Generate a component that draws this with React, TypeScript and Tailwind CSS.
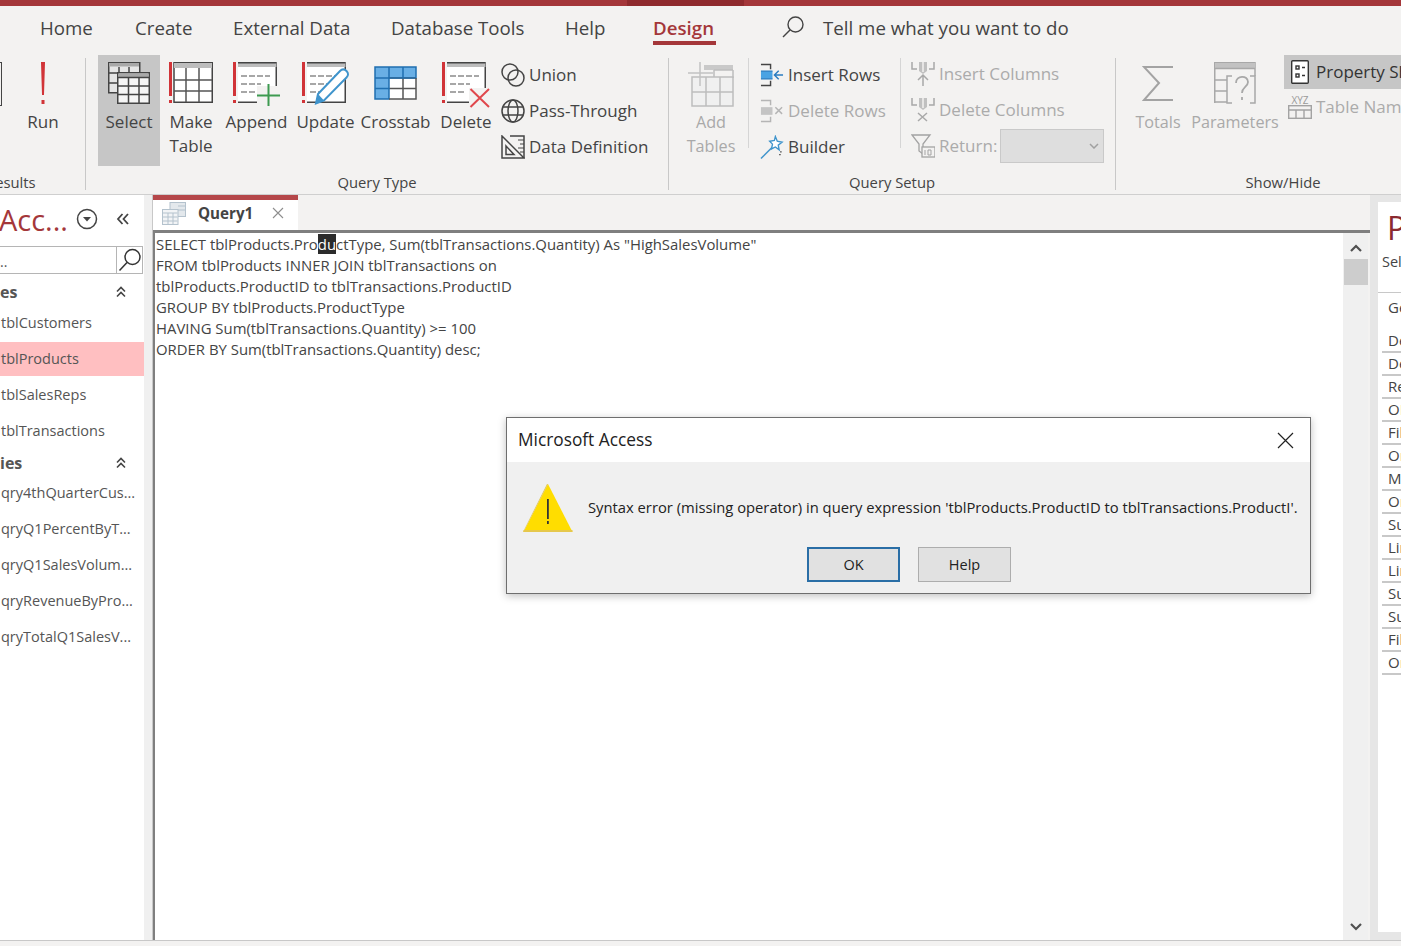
const FONT = "font-['Open_Sans','Noto_Sans',sans-serif]";

const TABS = [
  { label: "Home", w: "w-[95px]" },
  { label: "Create", w: "w-[98px]" },
  { label: "External Data", w: "w-[158px]" },
  { label: "Database Tools", w: "w-[174px]" },
  { label: "Help", w: "w-[88px]" },
];

const SQL = [
  `FROM tblProducts INNER JOIN tblTransactions on`,
  `tblProducts.ProductID to tblTransactions.ProductID`,
  `GROUP BY tblProducts.ProductType`,
  `HAVING Sum(tblTransactions.Quantity) >= 100`,
  `ORDER BY Sum(tblTransactions.Quantity) desc;`,
];

const PROPS = [
  "Description", "Default View", "Recordset Type", "ODBC Timeout", "Filter",
  "Order By", "Max Records", "Orientation", "Subdatasheet Name", "Link Child Fields",
  "Link Master Fields", "Subdatasheet Height", "Subdatasheet Expanded", "Filter On Load", "Order By On Load",
];

function RedBang({ x = 1.5 }: { x?: number }) {
  return (
    <>
      <rect x={x - 1.5} y="0" width="3" height="34" fill="#d13438" />
      <rect x={x - 1.5} y="38" width="3" height="3" fill="#d13438" />
    </>
  );
}

function Dashes() {
  return (
    <g stroke="#8a8a8a" strokeWidth="1.5">
      <path d="M8 14h6M16 14h6M24 14h6M32 14h5" />
      <path d="M8 22h6M16 22h6M24 22h4" />
      <path d="M8 30h6M16 30h6" />
    </g>
  );
}

function TableBase() {
  return (
    <>
      <path d="M5 .75H43.25V40.25H5" fill="#fff" stroke="#444" strokeWidth="1.5" />
      <rect x="5" y="0" width="38.5" height="5" fill="#bdbdbd" />
      <path d="M5 .75H43.25" stroke="#444" strokeWidth="1.5" />
    </>
  );
}

function SelectIcon() {
  return (
    <svg width="42" height="42" viewBox="0 0 42 42" fill="none">
      <rect x=".75" y=".75" width="31" height="30" fill="#e6e6e6" stroke="#444" strokeWidth="1.5" />
      <rect x="1" y="1" width="30" height="3.5" fill="#a8a8a8" />
      <path d="M1 11h9M1 21h9M11 5v5M21 5v5" stroke="#444" strokeWidth="1.5" />
      <rect x="9.75" y="10.75" width="31.5" height="30.5" fill="#f5f5f5" stroke="#444" strokeWidth="1.5" />
      <rect x="10.5" y="11.5" width="30" height="3.5" fill="#a8a8a8" />
      <path d="M10 15.5h31M10 24h31M10 32.5h31M20.5 15v26M31 15v26" stroke="#444" strokeWidth="1.5" />
    </svg>
  );
}

function MakeTableIcon() {
  return (
    <svg width="44" height="42" viewBox="0 0 44 42" fill="none">
      <RedBang />
      <rect x="5" y=".75" width="38.25" height="39.5" fill="#fff" stroke="#444" strokeWidth="1.5" />
      <rect x="5" y="1" width="38" height="5" fill="#bdbdbd" />
      <path d="M5 18h38M5 29h38M17 6v34M30 6v34" stroke="#555" strokeWidth="1.5" />
    </svg>
  );
}

function AppendIcon() {
  return (
    <svg width="48" height="44" viewBox="0 0 48 44" fill="none">
      <RedBang />
      <TableBase />
      <Dashes />
      <rect x="24" y="24" width="22" height="18" fill="#f3f2f1" />
      <path d="M24 33.5H47M35.5 22V45" stroke="#3d9a50" strokeWidth="2" />
    </svg>
  );
}

function UpdateIcon() {
  return (
    <svg width="48" height="44" viewBox="0 0 48 44" fill="none">
      <RedBang />
      <TableBase />
      <Dashes />
      <path d="M16 32 38 9c2-2 4.500-2 6.500 0s2 4.500 0 6.500L22 38.500l-8 3z" fill="#fff" stroke="#3f94cc" strokeWidth="2" />
      <path d="M16 32l6 6.500-8 3z" fill="#3f94cc" />
    </svg>
  );
}

function CrosstabIcon() {
  return (
    <svg width="43" height="34" viewBox="0 0 43 34" fill="none">
      <rect x="1" y="1" width="41" height="32" fill="#fff" />
      <rect x="1" y="1" width="41" height="11" fill="#69afe5" />
      <rect x="1" y="12" width="14" height="21" fill="#69afe5" />
      <path d="M15 12h27M15 22.5h27M29 12v21" stroke="#555" strokeWidth="1.5" />
      <path d="M1 1H42V12H15V33H1ZM1 12H15M1 22.5H15M15 1V12M29 1V12" stroke="#1f6fb0" strokeWidth="1.5" />
      <path d="M29 33H42V12" stroke="#555" strokeWidth="1.5" />
      <path d="M15 33H29" stroke="#555" strokeWidth="1.5" />
    </svg>
  );
}

function DeleteIcon() {
  return (
    <svg width="48" height="46" viewBox="0 0 48 46" fill="none">
      <RedBang />
      <TableBase />
      <Dashes />
      <rect x="27" y="26" width="20" height="20" fill="#f3f2f1" />
      <path d="M28.5 27 47 45M47 27 28.5 45" stroke="#e0474c" strokeWidth="2" />
    </svg>
  );
}

function UnionIcon() {
  return (
    <svg width="24" height="24" viewBox="0 0 24 24" fill="none" stroke="#444" strokeWidth="1.5">
      <circle cx="9" cy="9" r="8" />
      <circle cx="15" cy="15" r="8" />
    </svg>
  );
}

function GlobeIcon() {
  return (
    <svg width="24" height="24" viewBox="0 0 24 24" fill="none" stroke="#444" strokeWidth="1.5">
      <circle cx="12" cy="12" r="11" />
      <ellipse cx="12" cy="12" rx="5" ry="11" />
      <path d="M2 8h20M2 16h20" />
    </svg>
  );
}

function DataDefIcon() {
  return (
    <svg width="24" height="24" viewBox="0 0 24 24" fill="none" stroke="#444" strokeWidth="1.5">
      <path d="M1 1 23 23H1Z" />
      <path d="M5 11 13 19.5H5Z" />
      <path d="M9 1H23V23" />
      <path d="M17 5h6M19 9h4M17 13h6M19 17h4" strokeWidth="1.2" />
    </svg>
  );
}

function AddTablesIcon() {
  return (
    <svg width="46" height="46" viewBox="0 0 46 46" fill="none" stroke="#bdbdbd" strokeWidth="1.5">
      <path d="M4 15 H45 V44 H4 Z" fill="#f0f0f0" />
      <rect x="16" y="3" width="29" height="5" fill="#c9c9c9" stroke="none" />
      <path d="M26 8h19M45 8v8M4 30h41M18 15v29M32 15v29M26 8v7" />
      <path d="M0 11h25M12 0v24" stroke="#c2c2c2" strokeWidth="1.5" />
    </svg>
  );
}

function InsertRowsIcon() {
  return (
    <svg width="25" height="24" viewBox="0 0 25 24" fill="none">
      <path d="M1 1H11V6M1 23H11V18" stroke="#444" strokeWidth="1.5" />
      <rect x="1" y="8" width="12" height="8" fill="#4aa3e3" />
      <path d="M1 8h12M1 16h12" stroke="#2b7cc0" strokeWidth="1.2" />
      <path d="M24 12H15M19.500 7.500 15 12l4.500 4.500" stroke="#2b7cc0" strokeWidth="1.5" />
    </svg>
  );
}

function DeleteRowsIcon() {
  return (
    <svg width="25" height="24" viewBox="0 0 25 24" fill="none">
      <path d="M1 1H11V6M1 23H11V18" stroke="#b5b5b5" strokeWidth="1.5" />
      <rect x="1" y="8" width="12" height="8" fill="#c4c4c4" />
      <path d="M16 8l7 7M23 8l-7 7" stroke="#b5b5b5" strokeWidth="1.5" />
    </svg>
  );
}

function BuilderIcon() {
  return (
    <svg width="25" height="25" viewBox="0 0 25 25" fill="none">
      <path d="M1 24 14 11" stroke="#3f94cc" strokeWidth="1.6" />
      <path d="M16 1l2 5 5 1-4 3 1 5-4-3-4 2 1-5-3-3 5-1z" fill="#fff" stroke="#3f94cc" strokeWidth="1.4" />
      <path d="M21 17h1.5M20 20h1.5" stroke="#444" strokeWidth="1.2" />
    </svg>
  );
}

function ColumnsIcon({ mark }: { mark: "arrow" | "x" }) {
  return (
    <svg width="24" height="24" viewBox="0 0 24 24" fill="none" stroke="#a8a8a8" strokeWidth="1.5">
      <path d="M1 0V7H6M23 0V7H18" />
      <path d="M8 0V9L12 12L16 9V0" fill="#c0c0c0" stroke="none" />
      <path d="M12 0V10" stroke="#f3f2f1" />
      {mark === "arrow" ? <path d="M12 24V14M7 18l5-5 5 5" /> : <path d="M7 15l9 8M16 15l-9 8" />}
    </svg>
  );
}

function ReturnIcon() {
  return (
    <svg width="24" height="24" viewBox="0 0 24 24" fill="none" stroke="#a3a3a3" strokeWidth="1.3">
      <path d="M1 1H19L12 10V20L8 17V10Z" />
      <rect x="11" y="13" width="13" height="10" fill="#f3f2f1" />
      <path d="M14 16v5M17 16h3v5h-3z" strokeWidth="1" />
    </svg>
  );
}

function ParametersIcon() {
  return (
    <svg width="42" height="42" viewBox="0 0 42 42" fill="none" stroke="#a8a8a8" strokeWidth="1.5">
      <path d="M.75 41V.75H41V14" />
      <rect x="1" y="1" width="40" height="5" fill="#c2c2c2" stroke="none" />
      <path d="M1 6.5H41M1 18h12M1 29h12M1 40h12" />
      <path d="M18 14h-5v27h5M36 14h5v27h-5" />
      <path d="M22 21c0-8 12-8 12-1 0 5-6 5-6 11M28 35v3" strokeWidth="1.8" />
    </svg>
  );
}

function PropertySheetIcon() {
  return (
    <svg width="18" height="24" viewBox="0 0 18 24" fill="#fff" stroke="#333" strokeWidth="1.4">
      <rect x=".7" y=".7" width="16.6" height="22.6" rx="1" />
      <rect x="5" y="6" width="3" height="3" />
      <rect x="5" y="14" width="3" height="3" />
      <path d="M11 7.5h3M11 15.5h3" />
    </svg>
  );
}

function TableNamesIcon() {
  return (
    <div className="flex w-6 flex-col items-center">
      <span className="text-[10px] leading-[10px] text-[#9a9a9a]">XYZ</span>
      <svg width="24" height="14" viewBox="0 0 24 14" fill="none" stroke="#a3a3a3" strokeWidth="1.4">
        <rect x=".7" y=".7" width="22.6" height="12.6" />
        <path d="M1 5h22M8 5v8M16 5v8" />
      </svg>
    </div>
  );
}

function BigButton({ icon, lines, active, disabled, w }: { icon: React.ReactNode; lines: string[]; active?: boolean; disabled?: boolean; w: string }) {
  return (
    <div className={`${w} flex h-[111px] shrink-0 flex-col items-center pt-[7px] ${active ? "bg-[#c6c6c6]" : ""} ${disabled ? "text-[16.2px] text-[#a9a9a9]" : "text-[17px] text-[#444]"}`}>
      <div className="flex h-[47px] w-full items-start justify-center">{icon}</div>
      <div className="mt-px text-center leading-[24px]">
        {lines.map((l) => (
          <div key={l}>{l}</div>
        ))}
      </div>
    </div>
  );
}

function SmallButton({ icon, label, disabled }: { icon: React.ReactNode; label: string; disabled?: boolean }) {
  return (
    <div className={`flex h-[36px] items-center gap-[4px] text-[17px] whitespace-nowrap ${disabled ? "text-[#ababab]" : "text-[#444]"}`}>
      <div className="flex w-6 shrink-0 justify-center">{icon}</div>
      {label}
    </div>
  );
}

function Group({ label, w, children }: { label: string; w: string; children: React.ReactNode }) {
  return (
    <div className={`${w} flex shrink-0 flex-col`}>
      <div className="flex h-[114px] items-start">{children}</div>
      <div className="mt-[3px] text-center text-[14.8px] leading-[20px] text-[#444]">{label}</div>
    </div>
  );
}

function Sep() {
  return <div className="mt-[3px] h-[132px] w-px shrink-0 bg-[#c8c8c8]" />;
}

function Ribbon() {
  return (
    <div className="flex h-[143px] shrink-0 border-b border-[#cfcfcf] bg-[#f3f2f1] pt-[3px]">
      <div className="flex w-[85px] shrink-0 flex-col">
        <div className="flex h-[114px] items-start">
          <div className="h-[44px] w-[2px] translate-y-[7px] border-y-[1.5px] border-r-[1.5px] border-[#444]" />
          <div className="ml-[12px] flex w-[58px] flex-col items-center pt-[7px] text-[17px] text-[#444]">
            <svg width="6" height="42" viewBox="0 0 6 42" fill="#d13438">
              <path d="M1 0h4L4 33H2z" />
              <rect x="1.5" y="38" width="3" height="4" />
            </svg>
            <div className="mt-[6px] leading-[24px]">Run</div>
          </div>
        </div>
        <div className="mt-[3px] -ml-[14px] text-[14.8px] leading-[20px] text-[#444]">Results</div>
      </div>
      <Sep />
      <Group label="Query Type" w="w-[582px]">
        <div className="ml-[12px] flex">
          <BigButton active w="w-[62px]" icon={<SelectIcon />} lines={["Select"]} />
          <BigButton w="w-[62px]" icon={<MakeTableIcon />} lines={["Make", "Table"]} />
          <BigButton w="w-[69px]" icon={<AppendIcon />} lines={["Append"]} />
          <BigButton w="w-[69px]" icon={<UpdateIcon />} lines={["Update"]} />
          <BigButton w="w-[71px]" icon={<div className="mt-[4px]"><CrosstabIcon /></div>} lines={["Crosstab"]} />
          <BigButton w="w-[70px]" icon={<DeleteIcon />} lines={["Delete"]} />
          <div className="pt-[2px]">
            <SmallButton icon={<UnionIcon />} label="Union" />
            <SmallButton icon={<GlobeIcon />} label="Pass-Through" />
            <SmallButton icon={<DataDefIcon />} label="Data Definition" />
          </div>
        </div>
      </Group>
      <Sep />
      <Group label="Query Setup" w="w-[446px]">
        <div className="ml-[12px]">
          <BigButton disabled w="w-[60px]" icon={<AddTablesIcon />} lines={["Add", "Tables"]} />
        </div>
        <div className="ml-[7px] mt-[3px] h-[90px] w-px bg-[#d5d5d5]" />
        <div className="ml-[11px] w-[140px] pt-[2px]">
          <SmallButton icon={<InsertRowsIcon />} label="Insert Rows" />
          <SmallButton disabled icon={<DeleteRowsIcon />} label="Delete Rows" />
          <SmallButton icon={<BuilderIcon />} label="Builder" />
        </div>
        <div className="mt-[3px] h-[90px] w-px bg-[#d5d5d5]" />
        <div className="ml-[10px] pt-[1px]">
          <SmallButton disabled icon={<ColumnsIcon mark="arrow" />} label="Insert Columns" />
          <SmallButton disabled icon={<ColumnsIcon mark="x" />} label="Delete Columns" />
          <div className="flex items-center">
            <div className="w-[89px]">
              <SmallButton disabled icon={<ReturnIcon />} label="Return:" />
            </div>
            <div className="flex h-[34px] w-[104px] items-center justify-end border border-[#c9c9c9] bg-[#dedede] pr-[4px]">
              <svg width="10" height="6" viewBox="0 0 10 6" fill="none" stroke="#a0a0a0" strokeWidth="1.5">
                <path d="M1 1l4 4 4-4" />
              </svg>
            </div>
          </div>
        </div>
      </Group>
      <Sep />
      <Group label="Show/Hide" w="w-[334px]">
        <div className="ml-[14px] flex">
          <BigButton
            disabled
            w="w-[56px]"
            icon={
              <svg className="mt-[3px]" width="32" height="37" viewBox="0 0 32 37" fill="none" stroke="#a3a3a3" strokeWidth="2">
                <path d="M31 2H2L17 18 2 35H31" />
              </svg>
            }
            lines={["Totals"]}
          />
          <BigButton disabled w="w-[98px]" icon={<ParametersIcon />} lines={["Parameters"]} />
          <div className="w-[200px] shrink-0">
            <div className="flex h-[34px] items-center gap-[7px] bg-[#c6c6c6] pl-[7px] text-[17px] whitespace-nowrap text-[#333]">
              <PropertySheetIcon />
              Property Sheet
            </div>
            <div className="flex h-[36px] items-center gap-[4px] pl-[4px] text-[17px] whitespace-nowrap text-[#ababab]">
              <TableNamesIcon />
              Table Names
            </div>
          </div>
        </div>
      </Group>
    </div>
  );
}

function NavItem({ label, active }: { label: string; active?: boolean }) {
  return (
    <div className="flex h-[36px] items-center whitespace-nowrap text-[14.5px] text-[#555]">
      <div className={`flex h-[34px] w-full items-center pl-px ${active ? "bg-[#ffbfc1]" : ""}`}>{label}</div>
    </div>
  );
}

function NavHeader({ label }: { label: string }) {
  return (
    <div className="flex h-[32px] items-center justify-between pr-[17px] text-[16px] font-bold text-[#555]">
      {label}
      <svg width="12" height="12" viewBox="0 0 12 12" fill="none" stroke="#444" strokeWidth="1.6">
        <path d="M2 5.5 6 1.5l4 4M2 10.5l4-4 4 4" />
      </svg>
    </div>
  );
}

function NavPane() {
  return (
    <div className="w-[144px] shrink-0 overflow-hidden bg-white">
      <div className="flex h-[51px] items-center">
        <span className="-ml-px mt-[-2px] w-[76px] text-[29px] whitespace-nowrap text-[#a4373a]">Acc...</span>
        <svg className="ml-[1px] mt-[-4px]" width="22" height="22" viewBox="0 0 22 22" fill="none" stroke="#444" strokeWidth="1.5">
          <circle cx="11" cy="11" r="9.5" />
          <path d="M7 9h8l-4 4.5z" fill="#444" stroke="none" />
        </svg>
        <svg className="ml-[18px] mt-[-3px]" width="14" height="12" viewBox="0 0 14 12" fill="none" stroke="#444" strokeWidth="1.8">
          <path d="M6.5 1 2 6l4.5 5M12 1 7.5 6l4.5 5" />
        </svg>
      </div>
      <div className="flex h-[28px] w-[143px] items-center justify-between border-y border-r border-[#b5b5b5] text-[14px] text-[#555]">
        <span className="mt-[4px] leading-none">..</span>
        <div className="flex h-full w-[26px] items-center justify-center border-l border-[#b5b5b5]">
          <svg width="24" height="24" viewBox="0 0 24 24" fill="none" stroke="#333" strokeWidth="1.5">
            <circle cx="14.5" cy="9" r="7.5" />
            <path d="M9 14.5 1.5 22.5" />
          </svg>
        </div>
      </div>
      <div className="mt-[2px]">
        <NavHeader label="es" />
        <div className="-mt-[3px]">
          <NavItem label="tblCustomers" />
          <NavItem active label="tblProducts" />
          <NavItem label="tblSalesReps" />
          <NavItem label="tblTransactions" />
        </div>
        <div className="-mt-[2px] h-[32px]">
          <NavHeader label="ies" />
        </div>
        <div className="-mt-[4px]">
          <NavItem label="qry4thQuarterCus..." />
          <NavItem label="qryQ1PercentByT..." />
          <NavItem label="qryQ1SalesVolum..." />
          <NavItem label="qryRevenueByPro..." />
          <NavItem label="qryTotalQ1SalesV..." />
        </div>
      </div>
    </div>
  );
}

function Editor() {
  return (
    <div className="flex w-[1217px] shrink-0 flex-col">
      <div className="flex h-[35px] shrink-0">
        <div className="flex w-[145px] items-center border-t-[5px] border-[#b5474a] bg-white pb-[4px] pl-[9px] text-[#444]">
          <svg width="24" height="23" viewBox="0 0 24 23" fill="none" stroke="#b4c2cd" strokeWidth="1">
            <rect x="8" y=".5" width="15.5" height="14" fill="#e3e8ec" />
            <rect x=".5" y="7.5" width="15.5" height="15" fill="#f2f4f6" />
            <path d="M.5 11h15M.5 15h15M.5 19h15M6 11v12M11 11v12M16 4h8M16 8h8" />
          </svg>
          <span className="ml-[12px] w-[66px] text-[15.2px] font-bold">Query1</span>
          <svg className="ml-[8px]" width="12" height="12" viewBox="0 0 12 12" fill="none" stroke="#8e8e8e" strokeWidth="1.1">
            <path d="M1 1l10 10M11 1 1 11" />
          </svg>
        </div>
      </div>
      <div className="h-[3px] shrink-0 bg-[#7f7f7f]" />
      <div className="flex min-h-0 flex-1 border-l-2 border-[#7f7f7f] bg-white">
        <div className="flex-1 pl-px pt-px text-[14.9px] leading-[21px] whitespace-pre text-[#444]">
          <div>
            SELECT tblProducts.Pro<span className="bg-[#2b2b2b] text-white">du</span>ctType, Sum(tblTransactions.Quantity) As "HighSalesVolume"
          </div>
          {SQL.map((l) => (
            <div key={l}>{l}</div>
          ))}
        </div>
        <div className="flex w-[25px] shrink-0 flex-col items-center justify-between bg-[#f0f0f0] pt-[11px] pb-[9px]">
          <svg width="12" height="8" viewBox="0 0 12 8" fill="none" stroke="#505050" strokeWidth="2.2">
            <path d="M1 7l5-5 5 5" />
          </svg>
          <div className="absolute top-[259px] h-[26px] w-[24px] bg-[#cdcdcd]" />
          <svg width="12" height="8" viewBox="0 0 12 8" fill="none" stroke="#505050" strokeWidth="2.2">
            <path d="M1 1l5 5 5-5" />
          </svg>
        </div>
        <div className="w-[2px] shrink-0 bg-[#f3f2f1]" />
      </div>
    </div>
  );
}

function PropertyPane() {
  return (
    <div className="flex-1 overflow-hidden bg-[#e6e6e6] pb-[8px] pl-[8px] pt-[7px]">
      <div className="h-full overflow-hidden whitespace-nowrap bg-white pt-[2px] text-[#444]">
        <div className="pl-[9px] text-[32px] leading-[48px] text-[#8b2a30]">Property Sheet</div>
        <div className="pl-[4px] text-[14.5px] leading-[20px]">Selection type: Query Properties</div>
        <div className="mt-[20px] h-px bg-[#c8c8c8]" />
        <div className="pl-[10px] text-[15px] leading-[28px]">General</div>
        <div className="pl-[4px] pt-[9px]">
          {PROPS.map((p) => (
            <div key={p} className="h-[23px] border-b-2 border-[#c8c8c8] pl-[6px] text-[15px] leading-[21px]">{p}</div>
          ))}
        </div>
      </div>
    </div>
  );
}

function ErrorDialog() {
  return (
    <div className="absolute left-[506px] top-[417px] h-[177px] w-[805px] border border-[#6e6e6e] bg-[#f0f0f0] shadow-[0_2px_8px_rgba(0,0,0,0.25)]">
      <div className="flex h-[44px] items-center justify-between bg-white pl-[11px] pr-[16px] text-[17.3px] text-[#222]">
        Microsoft Access
        <svg width="17" height="17" viewBox="0 0 17 17" fill="none" stroke="#222" strokeWidth="1.2">
          <path d="M1 1l15 15M16 1 1 16" />
        </svg>
      </div>
      <div className="flex h-[91px] items-center pl-[16px]">
        <svg width="50" height="49" viewBox="0 0 50 49" fill="none">
          <path d="M25 1 49.5 49H.5Z" fill="#ffdd00" />
          <path d="M.5 49 25 1l-1 0L0 49z" fill="#e0c24a" />
          <rect x=".5" y="47" width="49" height="2" fill="#e6c84c" />
          <rect x="24" y="16" width="1.8" height="20" fill="#333" />
          <rect x="24" y="38" width="1.8" height="3" fill="#333" />
        </svg>
        <span className="ml-[15px] text-[14.77px] whitespace-nowrap text-[#222]">
          Syntax error (missing operator) in query expression 'tblProducts.ProductID to tblTransactions.ProductI'.
        </span>
      </div>
      <div className="-mt-[6px] flex pl-[300px] text-[14.5px] text-[#222]">
        <div className="flex h-[35px] w-[93px] items-center justify-center border-2 border-[#2a6ea6] bg-[#e1e1e1]">OK</div>
        <div className="ml-[18px] flex h-[35px] w-[93px] items-center justify-center border border-[#adadad] bg-[#e1e1e1]">Help</div>
      </div>
    </div>
  );
}

export default function App() {
  return (
    <div className={`${FONT} relative flex h-[946px] w-[1401px] flex-col overflow-hidden bg-[#f3f2f1]`}>
      <div className="flex h-[6px] shrink-0 bg-[#a4373a]">
        <div className="ml-[627px] w-[117px] bg-[#8f2b2e]" />
      </div>
      <div className="flex h-[46px] shrink-0 items-center pl-[40px] text-[18.7px] text-[#444]">
        {TABS.map((t) => (
          <div key={t.label} className={`${t.w} mb-[2px] shrink-0`}>{t.label}</div>
        ))}
        <div className="relative mb-[2px] w-[129px] shrink-0 font-semibold text-[#a4373a]">
          Design
          <div className="absolute left-0 top-[27px] h-[4px] w-[63px] bg-[#a4373a]" />
        </div>
        <svg className="mb-[4px]" width="22" height="22" viewBox="0 0 22 22" fill="none" stroke="#444" strokeWidth="1.4">
          <circle cx="13.5" cy="8.5" r="7.5" />
          <path d="M8 14 1 21" />
        </svg>
        <div className="mb-[2px] ml-[19px] whitespace-nowrap">Tell me what you want to do</div>
      </div>
      <Ribbon />
      <div className="flex min-h-0 flex-1">
        <NavPane />
        <div className="w-[9px] shrink-0 border-r border-[#c8c8c8] bg-[#f0f0f0]" />
        <Editor />
        <PropertyPane />
      </div>
      <div className="h-[6px] shrink-0 border-t border-[#c8c8c8] bg-[#f3f2f1]" />
      <ErrorDialog />
    </div>
  );
}
